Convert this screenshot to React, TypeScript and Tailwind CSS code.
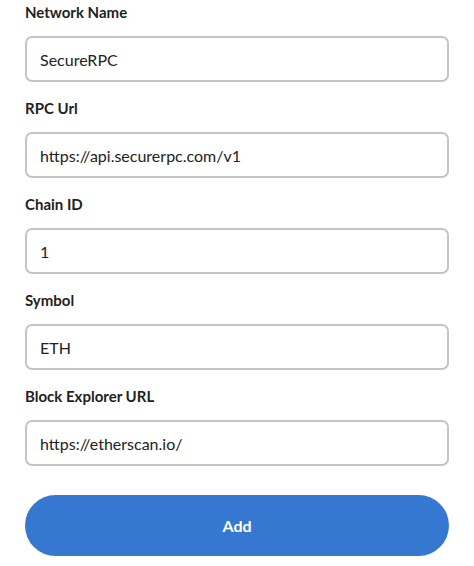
const FIELDS = [
  { label: 'Network Name', value: 'SecureRPC' },
  { label: 'RPC Url', value: 'https://api.securerpc.com/v1' },
  { label: 'Chain ID', value: '1' },
  { label: 'Symbol', value: 'ETH' },
  { label: 'Block Explorer URL', value: 'https://etherscan.io/' },
]

export default function App() {
  return (
    <div
      className="min-h-screen bg-white px-[25px] text-[#222222]"
      style={{ fontFamily: 'Lato, "Noto Sans", sans-serif' }}
    >
      {FIELDS.map((f) => (
        <div key={f.label} className="mb-[14px]">
          <label className="block h-[24px] text-[15px] font-bold leading-[24px]">{f.label}</label>
          <input
            readOnly
            value={f.value}
            className="mt-[12px] block h-[46px] w-full rounded-[7px] border-2 border-[#c4c4c4] bg-white px-[13px] text-[16px] text-[#222222] outline-none"
          />
        </div>
      ))}
      <button className="mt-[15px] h-[61px] w-full rounded-full bg-[#3677d2] text-[16px] font-bold text-white">
        Add
      </button>
    </div>
  )
}
